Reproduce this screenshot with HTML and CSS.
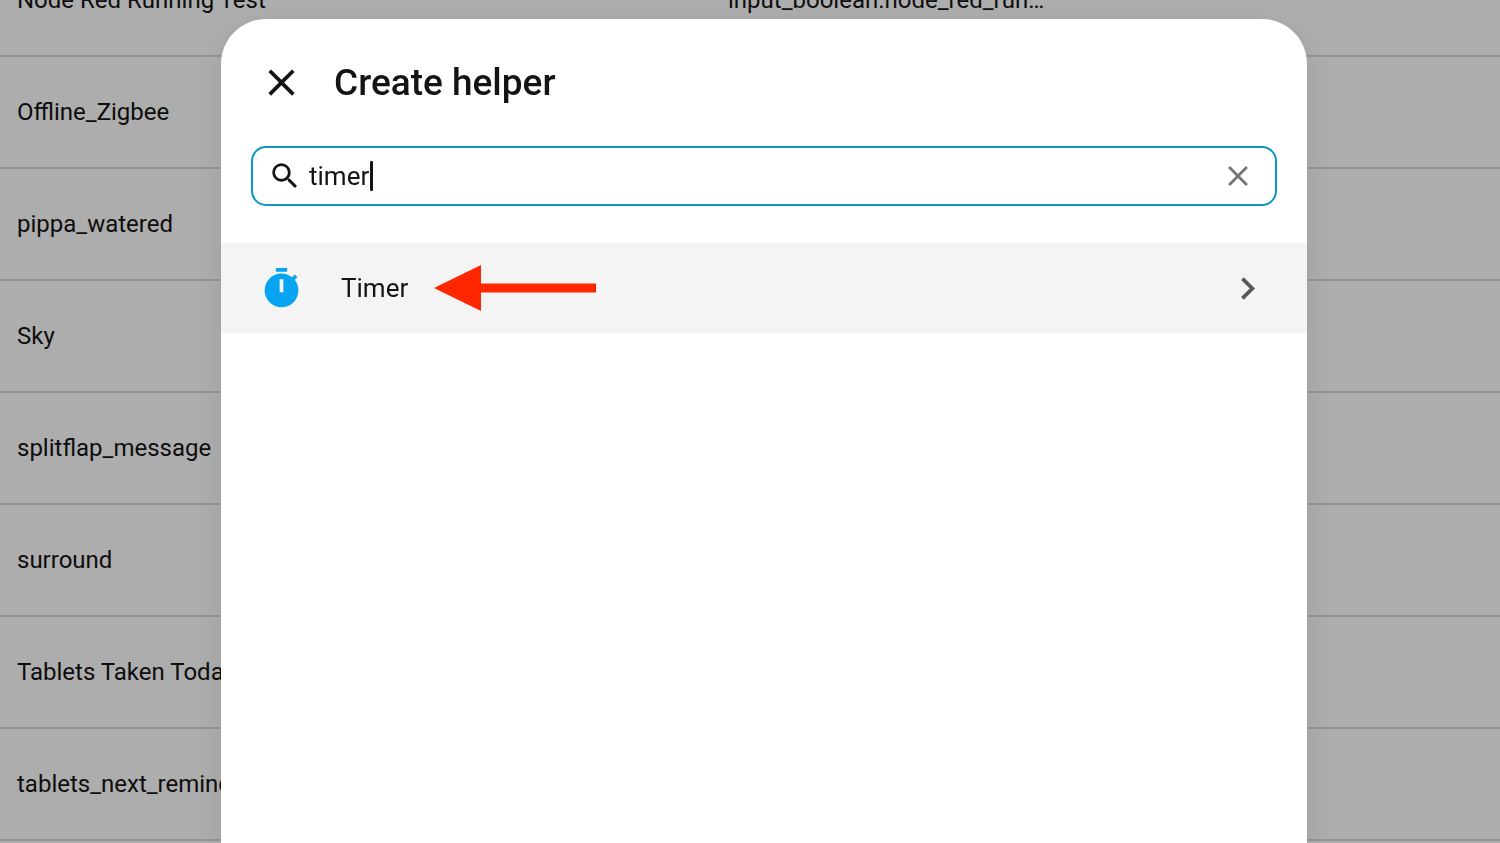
FILE: index.html
```html
<!DOCTYPE html>
<html lang="en">
<head>
    <meta charset="UTF-8">
    <meta name="viewport" content="width=device-width, initial-scale=1.0">
    <title>Create helper</title>
    <link rel="stylesheet" href="styles.css">
</head>
<body>
    <!-- Helpers table -->
    <table class="helpers">
        <tbody>
            <tr><td class="name">Node Red Running Test</td><td>input_boolean.node_red_run…</td></tr>
            <tr><td class="name">Offline_Zigbee</td><td></td></tr>
            <tr><td class="name">pippa_watered</td><td></td></tr>
            <tr><td class="name">Sky</td><td></td></tr>
            <tr><td class="name">splitflap_message</td><td></td></tr>
            <tr><td class="name">surround</td><td></td></tr>
            <tr><td class="name">Tablets Taken Today</td><td></td></tr>
            <tr><td class="name">tablets_next_reminder</td><td></td></tr>
        </tbody>
    </table>

    <!-- Dialog -->
    <div class="scrim">
        <div class="dialog" role="dialog" aria-labelledby="dialog-title">
            <header class="dialog-header">
                <button class="icon-button" type="button" aria-label="Close">
                    <svg class="icon" viewBox="0 0 24 24"><path d="M19,6.41L17.59,5L12,10.59L6.41,5L5,6.41L10.59,12L5,17.59L6.41,19L12,13.41L17.59,19L19,17.59L13.41,12L19,6.41Z"/></svg>
                </button>
                <h1 id="dialog-title">Create helper</h1>
            </header>

            <div class="search">
                <svg class="icon-small" viewBox="0 0 24 24"><path d="M9.5,3A6.5,6.5 0 0,1 16,9.5C16,11.11 15.41,12.59 14.44,13.73L14.71,14H15.5L20.5,19L19,20.5L14,15.5V14.71L13.73,14.44C12.59,15.41 11.11,16 9.5,16A6.5,6.5 0 0,1 3,9.5A6.5,6.5 0 0,1 9.5,3M9.5,5C7,5 5,7 5,9.5C5,12 7,14 9.5,14C12,14 14,12 14,9.5C14,7 12,5 9.5,5Z"/></svg>
                <div class="search-field">
                    <input type="text" value="timer" aria-label="Search helpers">
                    <span class="caret"></span>
                </div>
                <button class="icon-button clear" type="button" aria-label="Clear">
                    <svg class="icon-small" viewBox="0 0 24 24"><path d="M19,6.41L17.59,5L12,10.59L6.41,5L5,6.41L10.59,12L5,17.59L6.41,19L12,13.41L17.59,19L19,17.59L13.41,12L19,6.41Z"/></svg>
                </button>
            </div>

            <button class="helper-item" type="button">
                <svg class="icon timer" viewBox="0 0 24 24"><path d="M19.03 7.39L20.45 5.97C20 5.46 19.55 5 19.04 4.56L17.62 6C16.07 4.74 14.12 4 12 4A9 9 0 0 0 3 13A9 9 0 0 0 12 22C17 22 21 17.97 21 13C21 10.88 20.26 8.93 19.03 7.39M13 14H11V7H13V14M15 1H9V3H15V1Z"/></svg>
                <span class="helper-name">Timer</span>
                <svg class="arrow" viewBox="0 0 162 46"><path d="M0 23L47 0V18.500H162V27.500H47V46Z"/></svg>
                <svg class="icon chevron" viewBox="0 0 24 24"><path d="M8.59,16.58L13.17,12L8.59,7.41L10,6L16,12L10,18L8.59,16.58Z"/></svg>
            </button>
        </div>
    </div>
</body>
</html>
```
FILE: styles.css
```css
* {
    box-sizing: border-box;
}
body {
    margin: 0;
    height: 100vh;
    overflow: hidden;
    background-color: white;
    color: #141414;
    font-family: Roboto, sans-serif;
}
button {
    border: none;
    background: none;
    padding: 0;
    color: inherit;
    font-family: inherit;
    cursor: pointer;
}
svg {
    display: block;
    flex: none;
    fill: currentColor;
}

/* Helpers table, scrolled by half a row */
.helpers {
    width: 100%;
    margin-top: -55px;
    table-layout: fixed;
    border-collapse: separate;
    border-spacing: 0;
}
.helpers td {
    height: 112px;
    padding: 0 17px;
    border-bottom: 2px solid #dcdcdc;
    font-size: 24px;
    white-space: nowrap;
}
.helpers .name {
    width: 711px;
}

/* Dialog */
.scrim {
    position: fixed;
    inset: 0;
    display: flex;
    padding: 19px 193px 0 221px;
    background-color: rgba(0, 0, 0, 0.32);
}
.dialog {
    flex: 1;
    border-radius: 45px 45px 0 0;
    background-color: white;
    box-shadow: 0 8px 30px rgba(0, 0, 0, 0.1);
}
.dialog-header {
    display: flex;
    align-items: center;
    gap: 30px;
    height: 127px;
    padding: 0 38px;
}
.dialog-header h1 {
    margin: 0;
    font-size: 37px;
    font-weight: 500;
}
.icon {
    width: 45px;
    height: 45px;
}
.icon-small {
    width: 34px;
    height: 34px;
}

.search {
    display: flex;
    align-items: center;
    gap: 7px;
    height: 60px;
    margin: 0 30px 37px;
    padding: 0 20px 0 15px;
    border: 2px solid #0d96c6;
    border-radius: 15px;
}
.search-field {
    position: relative;
    flex: 1;
}
.search input {
    display: block;
    width: 100%;
    padding: 0;
    border: none;
    outline: none;
    background: none;
    color: inherit;
    font-family: inherit;
    font-size: 26px;
    line-height: 30px;
}
.caret {
    position: absolute;
    top: 0;
    left: 61px;
    width: 3px;
    height: 30px;
    border-radius: 1px;
    background-color: #141414;
}
.clear {
    color: #757575;
}

.helper-item {
    display: flex;
    align-items: center;
    width: 100%;
    height: 90px;
    padding: 0 37px 0 38px;
    background-color: #f4f4f4;
    font-size: 26px;
}
.timer {
    color: #06a4f1;
}
.helper-name {
    margin-left: 37px;
}
.arrow {
    width: 162px;
    height: 46px;
    margin-left: 26px;
    fill: #ff2600;
}
.chevron {
    margin-left: auto;
    color: #585858;
}
```
